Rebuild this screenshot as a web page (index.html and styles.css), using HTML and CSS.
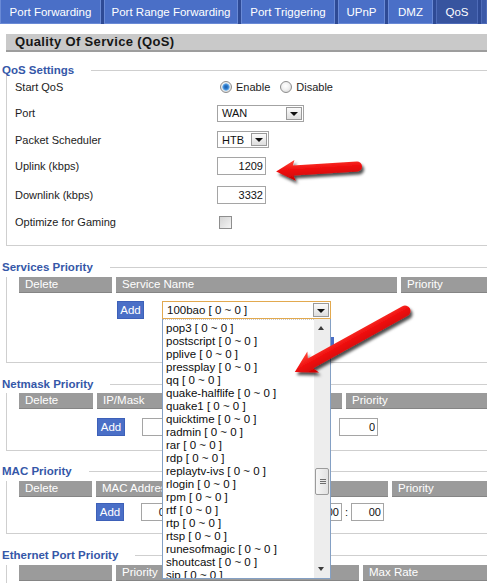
FILE: index.html
```html
<!DOCTYPE html>
<html lang="en">
<head>
<meta charset="utf-8">
<title>Quality Of Service (QoS)</title>
<link rel="stylesheet" href="styles.css">
</head>
<body>
<div class="page">
  <nav class="tabs">
    <span class="tab t1">Port Forwarding</span>
    <span class="tab t2">Port Range Forwarding</span>
    <span class="tab t3">Port Triggering</span>
    <span class="tab t4">UPnP</span>
    <span class="tab t5">DMZ</span>
    <span class="tab t6 active">QoS</span>
    <span class="tab t7"></span>
  </nav>

  <h2 class="title">Quality Of Service (QoS)</h2>

  <section class="sec sec-qos">
    <div class="legend"><span>QoS Settings</span></div>
    <div class="box qos">
      <span class="label">Start QoS</span>
      <div class="radios">
        <span class="radio on"></span><span class="rtext">Enable</span>
        <span class="radio off"></span><span class="rtext">Disable</span>
      </div>

      <span class="label">Port</span>
      <div class="select sel-wan"><span>WAN</span><i class="drop"></i></div>

      <span class="label">Packet Scheduler</span>
      <div class="select sel-htb"><span>HTB</span><i class="drop"></i></div>

      <span class="label">Uplink (kbps)</span>
      <input class="field kbps" type="text" value="1209">

      <span class="label">Downlink (kbps)</span>
      <input class="field kbps" type="text" value="3332">

      <span class="label">Optimize for Gaming</span>
      <span class="check"></span>
    </div>
  </section>

  <section class="sec">
    <div class="legend"><span>Services Priority</span></div>
    <div class="box svc">
      <div class="hdr hdr-svc"><span>Delete</span><span>Service Name</span><span>Priority</span></div>
      <div class="addrow add-svc">
        <span class="btn">Add</span>
        <div class="combo">
          <div class="select focus"><span>100bao [ 0 ~ 0 ]</span><i class="drop big"></i></div>
          <div class="listbox">
            <ul class="items">
              <li>pop3 [ 0 ~ 0 ]</li>
              <li>postscript [ 0 ~ 0 ]</li>
              <li>pplive [ 0 ~ 0 ]</li>
              <li>pressplay [ 0 ~ 0 ]</li>
              <li>qq [ 0 ~ 0 ]</li>
              <li>quake-halflife [ 0 ~ 0 ]</li>
              <li>quake1 [ 0 ~ 0 ]</li>
              <li>quicktime [ 0 ~ 0 ]</li>
              <li>radmin [ 0 ~ 0 ]</li>
              <li>rar [ 0 ~ 0 ]</li>
              <li>rdp [ 0 ~ 0 ]</li>
              <li>replaytv-ivs [ 0 ~ 0 ]</li>
              <li>rlogin [ 0 ~ 0 ]</li>
              <li>rpm [ 0 ~ 0 ]</li>
              <li>rtf [ 0 ~ 0 ]</li>
              <li>rtp [ 0 ~ 0 ]</li>
              <li>rtsp [ 0 ~ 0 ]</li>
              <li>runesofmagic [ 0 ~ 0 ]</li>
              <li>shoutcast [ 0 ~ 0 ]</li>
              <li>sip [ 0 ~ 0 ]</li>
            </ul>
            <div class="sb">
              <i class="sb-up"></i>
              <i class="sb-thumb"></i>
              <i class="sb-down"></i>
            </div>
          </div>
        </div>
      </div>
      <div class="btnbar"></div>
    </div>
  </section>

  <section class="sec">
    <div class="legend"><span>Netmask Priority</span></div>
    <div class="box net">
      <div class="hdr hdr-net"><span>Delete</span><span>IP/Mask</span><span>Priority</span></div>
      <div class="addrow add-net">
        <span class="btn">Add</span>
        <input class="field ip" type="text" value="">
        <input class="field prio" type="text" value="0">
      </div>
    </div>
  </section>

  <section class="sec sec-mac">
    <div class="legend"><span>MAC Priority</span></div>
    <div class="box mac">
      <div class="hdr hdr-mac"><span>Delete</span><span>MAC Address</span><span>Priority</span></div>
      <div class="addrow add-mac">
        <span class="btn">Add</span>
        <input class="field oct first" type="text" value="00"><span class="colon">:</span>
        <input class="field oct" type="text" value="00"><span class="colon">:</span>
        <input class="field oct" type="text" value="00"><span class="colon">:</span>
        <input class="field oct" type="text" value="00"><span class="colon">:</span>
        <input class="field oct" type="text" value="00"><span class="colon">:</span>
        <input class="field oct" type="text" value="00">
      </div>
    </div>
  </section>

  <section class="sec">
    <div class="legend"><span>Ethernet Port Priority</span></div>
    <div class="box eth">
      <div class="hdr hdr-eth"><span></span><span>Priority</span><span>Max Rate</span></div>
    </div>
  </section>
</div>

<svg class="arrows" width="487" height="583" viewBox="0 0 487 583" aria-hidden="true">
  <defs>
    <linearGradient id="red" x1="0" y1="0" x2="0" y2="1">
      <stop offset="0" stop-color="#c80000"/>
      <stop offset="0.55" stop-color="#f01010"/>
      <stop offset="1" stop-color="#ff4a3a"/>
    </linearGradient>
    <filter id="shadow" x="-20%" y="-60%" width="150%" height="240%">
      <feDropShadow dx="2" dy="3" stdDeviation="1.7" flood-color="#000" flood-opacity="0.7"/>
    </filter>
  </defs>
  <g filter="url(#shadow)">
    <path transform="translate(357 166.5) rotate(176.4)" fill="url(#red)"
          d="M0,-5 L64,-5 L62,-10.5 L81,0 L62,10.5 L64,5 L0,5 A5,5 0 0 1 0,-5 Z"/>
  </g>
  <g filter="url(#shadow)">
    <path transform="translate(405 311) rotate(151)" fill="url(#red)"
          d="M0,-5.5 L108,-5.5 L105,-12 L126,0 L105,12 L108,5.5 L0,5.5 A5.5,5.5 0 0 1 0,-5.5 Z"/>
  </g>
</svg>
</body>
</html>
```

FILE: styles.css
```css
* { box-sizing: border-box; margin: 0; padding: 0; }

html, body {
  width: 487px;
  height: 583px;
  overflow: hidden;
  background: #fff;
}

body {
  position: relative;
  font-family: "Liberation Sans", Arial, sans-serif;
  font-size: 11px;
  color: #1c1c1c;
}

.page { width: 487px; }

/* ---------- tabs ---------- */
.tabs {
  display: flex;
  gap: 3px;
  height: 24px;
  background: #2e4a95;
}
.tab {
  display: flex;
  align-items: center;
  justify-content: center;
  background: #4a6fc7;
  color: #fff;
  font-size: 11.5px;
  border: 1px solid #6a8ad6;
  border-top: 0;
  white-space: nowrap;
}
.tab.active {
  background: #37549f;
  border-color: #4e6bb8;
}
.t1 { width: 101px; }
.t2 { width: 134px; }
.t3 { width: 94px; }
.t4 { width: 47px; }
.t5 { width: 45px; }
.t6 { width: 42px; }
.t7 { flex: 1; background: #3b59a8; border-color: #4e6bb8; }

/* ---------- page title ---------- */
.title {
  margin: 10px 0 0 6px;
  height: 18px;
  padding-left: 9px;
  background: #c9c9c9;
  border-bottom: 2px solid #9d9d9d;
  font-size: 13px;
  letter-spacing: 0.35px;
  line-height: 16px;
  font-weight: bold;
  color: #161616;
}

/* ---------- sections ---------- */
.legend {
  display: flex;
  align-items: center;
  height: 14px;
  margin-top: 14px;
  padding-left: 2px;
}
.sec-qos .legend { margin-top: 11px; }
.sec-mac .legend { margin-top: 13px; }
.legend span {
  font-size: 11.5px;
  font-weight: bold;
  color: #3557a8;
  white-space: nowrap;
}
.legend::after {
  content: "";
  flex: 1;
  height: 1px;
  margin-left: 17px;
  background: #cfcfcf;
}

.box {
  margin: -3px 0 0 6px;
  border-left: 1px solid #cfcfcf;
  border-bottom: 1px solid #cfcfcf;
}

/* ---------- QoS settings ---------- */
.qos {
  display: grid;
  grid-template-columns: 202px 1fr;
  grid-template-rows: 25px 28px 25px 28px 29px 26px;
  align-items: center;
  justify-items: start;
  padding: 0 0 10px 8px;
}
.label { color: #1c1c1c; }

.radios { display: flex; align-items: center; margin-left: 3px; }
.radio {
  width: 12px;
  height: 12px;
  border-radius: 50%;
  border: 1px solid #8d8d8d;
  background: radial-gradient(circle at 45% 40%, #ffffff 0, #f1f1f1 45%, #cfcfcf 100%);
}
.radio.on {
  background:
    radial-gradient(circle at 50% 50%, #1b5aa6 0, #2f7fd0 2.2px, #7ab8ee 3.4px, rgba(255,255,255,0) 4px),
    radial-gradient(circle at 45% 40%, #ffffff 0, #eeeeee 50%, #cfcfcf 100%);
}
.rtext { margin-left: 4px; }
.radio.off { margin-left: 10px; }

.select {
  display: flex;
  align-items: center;
  height: 17px;
  padding: 0 1px 0 4px;
  border: 1px solid #a3a3a3;
  background: #fff;
  color: #111;
}
.select span { flex: 1; white-space: nowrap; }
.sel-wan { width: 87px; }
.sel-htb { width: 52px; }

.drop {
  position: relative;
  width: 16px;
  height: 13px;
  border: 1px solid #9a9a9a;
  background: linear-gradient(#fbfbfb, #dedede);
}
.drop::after {
  content: "";
  position: absolute;
  left: 3px;
  top: 4px;
  border-left: 4px solid transparent;
  border-right: 4px solid transparent;
  border-top: 4px solid #111;
}
.drop.big { height: 14px; }
.drop.big::after { top: 5px; }

.field {
  height: 18px;
  border: 1px solid #a5a5a5;
  background: #fff;
  font-family: "Liberation Sans", Arial, sans-serif;
  font-size: 11px;
  color: #111;
  text-align: right;
  padding: 0 2px;
  outline: none;
}
.kbps { width: 49px; }

.check {
  width: 13px;
  height: 13px;
  margin-left: 2px;
  border: 1px solid #8e8e8e;
  background: linear-gradient(135deg, #d4d4d4, #f4f4f4);
}

/* ---------- tables ---------- */
.hdr {
  display: grid;
  gap: 4px;
  height: 16px;
  margin: 6px 0 0 12px;
}
.hdr span {
  background: #9b9b9b;
  border-bottom: 1px solid #858585;
  color: #fff;
  padding-left: 6px;
  font-size: 11.5px;
  line-height: 15px;
  white-space: nowrap;
  overflow: hidden;
}
.hdr-svc { grid-template-columns: 93px 281px 1fr; }
.hdr-net { grid-template-columns: 74px 245px 1fr; margin-top: 5px; }
.hdr-mac { grid-template-columns: 73px 292px 1fr; }
.hdr-eth { grid-template-columns: 93px 243px 1fr; }

.addrow {
  display: flex;
  align-items: center;
  height: 18px;
}
.btn {
  display: flex;
  align-items: center;
  justify-content: center;
  height: 18px;
  background: #4a6fc7;
  border: 1px solid #3d60b8;
  color: #fff;
  font-size: 11.5px;
}

.svc { padding-bottom: 6px; }
.add-svc { margin: 8px 0 0 110px; }
.add-svc .btn { width: 27px; }
.btnbar {
  width: 54px;
  height: 19px;
  margin: 18px 0 0 273px;
  background: #4a6fc7;
}

.combo {
  position: relative;
  width: 169px;
  margin-left: 18px;
}
.select.focus {
  height: 18px;
  border-color: #e2a94f;
  font-size: 11.5px;
}

.listbox {
  position: absolute;
  left: 0;
  top: 18px;
  z-index: 10;
  display: flex;
  width: 169px;
  height: 260px;
  border: 1px solid #84a0c4;
  border-top: 0;
  background: #fff;
  overflow: hidden;
}
.items {
  list-style: none;
  flex: 1;
  padding: 2px 0 0 3px;
  border-top: 1px dotted #c8c8c8;
}
.items li {
  height: 13px;
  line-height: 13px;
  font-size: 11.5px;
  color: #0c0c0c;
  white-space: nowrap;
}
.sb {
  display: flex;
  flex-direction: column;
  width: 16px;
  background: #ededed;
}
.sb-up, .sb-down {
  position: relative;
  height: 16px;
}
.sb-up::after, .sb-down::after {
  content: "";
  position: absolute;
  left: 4px;
  border-left: 3.5px solid transparent;
  border-right: 3.5px solid transparent;
}
.sb-up::after { top: 7px; border-bottom: 4px solid #3a3a3a; }
.sb-down { margin-top: auto; }
.sb-down::after { top: 5px; border-top: 4px solid #3a3a3a; }
.sb-thumb {
  height: 27px;
  margin: 133px 1px 0;
  border: 1px solid #9b9b9b;
  border-radius: 2px;
  background:
    linear-gradient(#6e6e6e, #6e6e6e) 4px 10px / 6px 1px no-repeat,
    linear-gradient(#6e6e6e, #6e6e6e) 4px 12px / 6px 1px no-repeat,
    linear-gradient(#6e6e6e, #6e6e6e) 4px 14px / 6px 1px no-repeat,
    linear-gradient(90deg, #f6f6f6, #e2e2e2);
}

.net { padding-bottom: 14px; }
.add-net { margin: 9px 0 0 90px; }
.add-net .btn { width: 28px; }
.ip { width: 178px; margin-left: 17px; }
.prio { width: 39px; margin-left: 19px; }

.mac { padding-bottom: 12px; }
.add-mac { margin: 6px 0 0 89px; }
.add-mac .btn { width: 28px; }
.oct { width: 33px; }
.oct.first { margin-left: 17px; }
.colon { width: 9px; text-align: center; color: #111; }

.eth { border-bottom: 0; height: 30px; }

/* ---------- annotation arrows ---------- */
.arrows {
  position: absolute;
  left: 0;
  top: 0;
  z-index: 20;
  pointer-events: none;
}
```
